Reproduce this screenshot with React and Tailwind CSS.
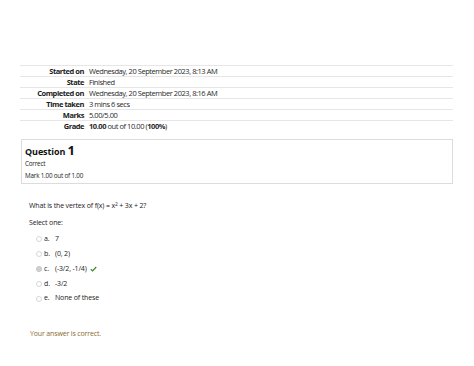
import React from 'react';

const summary = [
  { label: 'Started on', value: 'Wednesday, 20 September 2023, 8:13 AM' },
  { label: 'State', value: 'Finished' },
  { label: 'Completed on', value: 'Wednesday, 20 September 2023, 8:16 AM' },
  { label: 'Time taken', value: '3 mins 6 secs' },
  { label: 'Marks', value: '5.00/5.00' },
  {
    label: 'Grade',
    value: (
      <>
        <b>10.00</b> out of 10.00 (<b>100%</b>)
      </>
    ),
  },
];

const options = [
  { key: 'a', text: '7' },
  { key: 'b', text: '(0, 2)' },
  { key: 'c', text: '(-3/2, -1/4)', checked: true },
  { key: 'd', text: '-3/2' },
  { key: 'e', text: 'None of these' },
];

function Radio({ checked }) {
  return (
    <span
      className={`inline-block w-[6px] h-[6px] rounded-full border ${
        checked ? 'border-[#c4c4c4] bg-[#d0d0d0]' : 'border-[#d8d8d8] bg-white'
      }`}
    ></span>
  );
}

export default function App() {
  return (
    <div
      className="w-[474px] h-[366px] bg-white text-[#333] overflow-hidden"
      style={{ fontFamily: '"Open Sans", sans-serif' }}
    >
      <div className="pt-[65px] pl-[20px] pr-[21px]">
        {/* Attempt summary */}
        <div className="text-[7.5px] text-[#2a2a2a]">
          {summary.map((row) => (
            <div key={row.label} className="flex border-t border-[#e6e6e6] h-[11px] leading-[10px]">
              <div className="w-[65px] text-right font-bold pr-[1px] whitespace-nowrap text-[#1a1a1a] tracking-[-0.45px]">
                {row.label}
              </div>
              <div className="ml-[4px] whitespace-nowrap tracking-[-0.45px]">{row.value}</div>
            </div>
          ))}
        </div>

        {/* Question info box */}
        <div className="mt-[8px] ml-[1px] border border-[#dcdcdc] px-[3px] pt-[3px] pb-[2px]">
          <h3 className="font-bold text-[9px] leading-[14px] text-[#111] tracking-[-0.1px]">
            Question <span className="text-[13px]">1</span>
          </h3>
          <div className="text-[6.3px] leading-[10px] text-[#222] tracking-[-0.2px]">Correct</div>
          <div className="mt-[2px] text-[6.3px] leading-[10px] text-[#222] tracking-[-0.2px]">Mark 1.00 out of 1.00</div>
        </div>

        {/* Question content */}
        <div className="pl-[9px] pt-[17px] text-[7px] tracking-[-0.15px] text-[#222]">
          <p className="leading-[10px]">
            What is the vertex of f(x) = x<sup className="text-[5px]">2</sup> + 3x + 2?
          </p>
          <p className="mt-[7px] leading-[10px]">Select one:</p>
          <div className="mt-[4px] flex flex-col">
            {options.map((o) => (
              <div key={o.key} className="flex items-center h-[14.8px] pl-[7px]">
                <Radio checked={o.checked} />
                <span className="ml-[2px] w-[11px]">{o.key}.</span>
                <span>{o.text}</span>
                {o.checked && (
                  <svg className="ml-[3px]" width="7" height="6" viewBox="0 0 7 6">
                    <path d="M0.8 3.2 L2.6 4.9 L6.2 1" fill="none" stroke="#3f8a2a" strokeWidth="1.3" />
                  </svg>
                )}
              </div>
            ))}
          </div>
          <p className="mt-[23px] pl-[1px] text-[#8a6a2d] leading-[10px]">Your answer is correct.</p>
        </div>
      </div>
    </div>
  );
}
